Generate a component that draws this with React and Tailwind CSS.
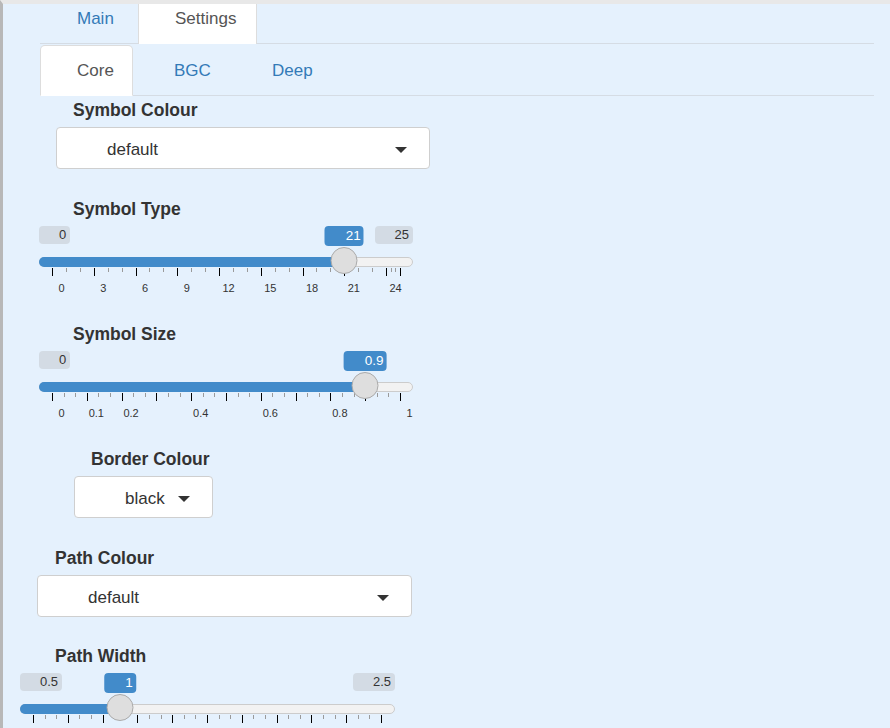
import React from 'react';

// value -> px from slider left edge (track padding 13px each side)
const pos = (v, min, max) => 13 + ((v - min) / (max - min)) * 348;
const fmt = (v) => String(parseFloat(v.toFixed(2)));

const Caret = () => (
  <svg width="12" height="6" viewBox="0 0 12 6" className="shrink-0">
    <path d="M0 0 L12 0 L6 6 Z" fill="#333" />
  </svg>
);

const Select = ({ value, className }) => (
  <div
    className={`flex h-[42px] items-center justify-between rounded-[4px] border border-[#cfcfcf] bg-white pl-[50px] pr-[22px] pt-[3px] text-[17px] text-[#333] ${className}`}
  >
    <span>{value}</span>
    <Caret />
  </div>
);

const Label = ({ children, className }) => (
  <div className={`h-[20px] pt-[1px] text-[17.5px] font-bold leading-[20px] text-[#333] ${className}`}>{children}</div>
);

const RangeSlider = ({ min, max, value, step, labels, showMax = true, className }) => {
  const majors = [];
  const n = Math.floor((max - min) / step + 1e-6);
  for (let i = 0; i <= n; i++) majors.push(min + i * step);
  if (max - majors[majors.length - 1] > 1e-6) majors.push(max);
  const minors = [];
  for (let i = 0; i < majors.length - 1; i++) {
    const a = majors[i];
    const b = majors[i + 1];
    minors.push(a + (b - a) / 3, a + (2 * (b - a)) / 3);
  }
  const x = pos(value, min, max);

  return (
    <div className={`relative h-[72px] w-[374px] ${className}`}>
      {/* min / max */}
      <div className="flex justify-between">
        <span className="h-[18px] rounded-[4px] bg-[#d3dbe4] pl-[20px] pr-[4px] text-[13px] leading-[18px] text-[#333]">
          {fmt(min)}
        </span>
        {showMax && (
          <span className="h-[18px] rounded-[4px] bg-[#d3dbe4] pl-[20px] pr-[4px] text-[13px] leading-[18px] text-[#333]">
            {fmt(max)}
          </span>
        )}
      </div>
      {/* value bubble */}
      <span
        className="absolute top-0 h-[20px] -translate-x-1/2 rounded-[4px] bg-[#428bca] pl-[21px] pr-[3px] text-[13.5px] leading-[20px] text-white"
        style={{ left: x }}
      >
        {fmt(value)}
      </span>
      {/* track */}
      <div className="absolute left-0 right-0 top-[31px] h-[10px] rounded-full border border-[#cccccc] bg-[#f2f2f2]" />
      <div className="absolute left-0 top-[31px] h-[10px] rounded-l-full bg-[#428bca]" style={{ width: x }} />
      {/* ticks */}
      {majors.map((v) => (
        <div
          key={`M${v}`}
          className="absolute top-[42px] h-[8px] w-px bg-black"
          style={{ left: Math.round(pos(v, min, max)) }}
        />
      ))}
      {minors.map((v) => (
        <div
          key={`m${v}`}
          className="absolute top-[42px] h-[4px] w-px bg-[#9a9a9a]"
          style={{ left: Math.round(pos(v, min, max)) }}
        />
      ))}
      {labels.map((v) => (
        <span
          key={`l${v}`}
          className="absolute top-[56px] -translate-x-1/2 text-[11px] leading-[13px] text-[#333]"
          style={{ left: pos(v, min, max) + 9.5 }}
        >
          {fmt(v)}
        </span>
      ))}
      {/* thumb */}
      <div
        className="absolute top-[21px] h-[27px] w-[27px] -translate-x-1/2 rounded-full border border-[#aaaaaa] bg-[#dedede]"
        style={{ left: x }}
      />
    </div>
  );
};

const App = () => {
  return (
    <div className="h-[728px] w-[890px] overflow-hidden border-l-[3px] border-t-[4px] border-l-[#b8b8b8] border-t-[#e8e8e8] bg-[#e5f1fd] font-['Liberation_Sans',Arial,sans-serif] text-[#333]">
      {/* tabs */}
      <div className="ml-[37px] mr-[16px]">
        <div className="flex h-[40px] items-start gap-[2px] border-b border-[#d5dce4] text-[17px] leading-[20px]">
          <div className="w-[96px] pl-[37px] pt-[5px] text-[#337ab7]">Main</div>
          <div className="-mb-px h-[40px] w-[119px] border-x border-[#dddddd] bg-white pl-[36px] pt-[5px] text-[#555]">
            Settings
          </div>
        </div>
        <div className="flex h-[52px] items-end gap-[2px] border-b border-[#d5dce4] text-[17px] leading-[20px]">
          <div className="-mb-px h-[51px] w-[93px] rounded-t-[5px] border border-[#dddddd] border-b-transparent bg-white pl-[36px] pt-[15px] text-[#555]">
            Core
          </div>
          <div className="-mb-px h-[51px] w-[96px] pl-[39px] pt-[16px] text-[#337ab7]">BGC</div>
          <div className="-mb-px h-[51px] w-[96px] pl-[39px] pt-[16px] text-[#337ab7]">Deep</div>
        </div>
      </div>

      {/* settings */}
      <Label className="ml-[70px] mt-[3px]">Symbol Colour</Label>
      <Select value="default" className="ml-[53px] mt-[8px] w-[374px]" />

      <Label className="ml-[70px] mt-[29px]">Symbol Type</Label>
      <RangeSlider
        className="ml-[36px] mt-[8px]"
        min={0}
        max={25}
        value={21}
        step={3}
        labels={[0, 3, 6, 9, 12, 15, 18, 21, 24]}
      />

      <Label className="ml-[70px] mt-[25px]">Symbol Size</Label>
      <RangeSlider
        className="ml-[36px] mt-[8px]"
        min={0}
        max={1}
        value={0.9}
        step={0.1}
        showMax={false}
        labels={[0, 0.1, 0.2, 0.4, 0.6, 0.8, 1]}
      />

      <Label className="ml-[88px] mt-[25px]">Border Colour</Label>
      <Select value="black" className="ml-[71px] mt-[8px] w-[139px]" />

      <Label className="ml-[52px] mt-[29px]">Path Colour</Label>
      <Select value="default" className="ml-[34px] mt-[8px] w-[375px]" />

      <Label className="ml-[52px] mt-[28px]">Path Width</Label>
      <RangeSlider
        className="ml-[17px] mt-[8px] w-[375px]"
        min={0.5}
        max={2.5}
        value={1}
        step={0.2}
        labels={[]}
      />
    </div>
  );
};

export default App;
